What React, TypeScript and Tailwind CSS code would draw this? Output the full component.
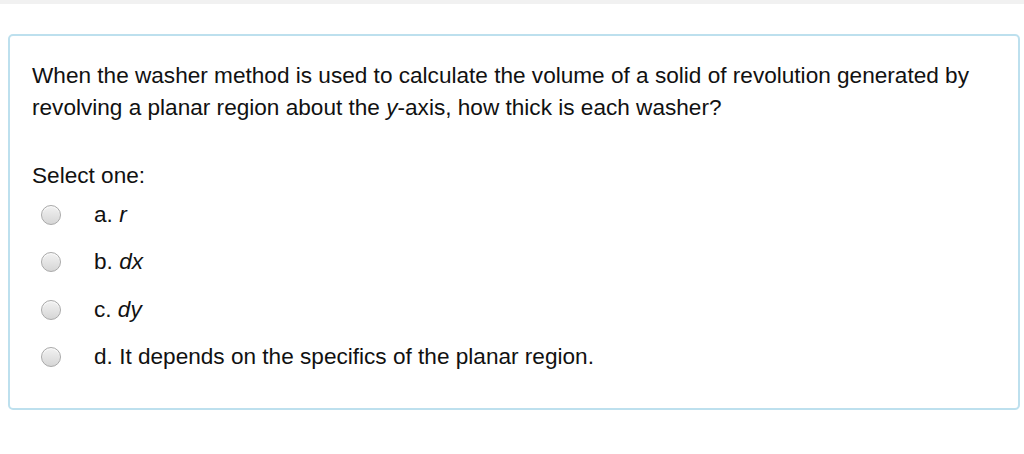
import React from 'react';

const options = [
  { letter: 'a.', text: 'r', italic: true },
  { letter: 'b.', text: 'dx', italic: true },
  { letter: 'c.', text: 'dy', italic: true },
  { letter: 'd.', text: 'It depends on the specifics of the planar region.', italic: false },
];

function Radio() {
  return (
    <span className="block w-[20px] h-[20px] rounded-full border border-[#a9a9a9] bg-gradient-to-b from-[#f2f2f2] to-[#d6d6d6] shadow-[inset_0_1px_1px_rgba(255,255,255,0.8)]" />
  );
}

export default function App() {
  return (
    <div className="w-[1024px] h-[454px] bg-white font-['Liberation_Sans',Arial,sans-serif] text-[#111]">
      <div className="h-[4px] bg-[#f1f1f1]" />
      <div className="pt-[30px] pl-[8px] pr-[4px]">
        <div className="h-[376px] border-2 border-[#bde0ee] rounded-[5px] pl-[22px] pt-[24px]">
          <p className="text-[22.6px] leading-[32px] pr-[10px]">
            When the washer method is used to calculate the volume of a solid of revolution generated by
            <br />
            revolving a planar region about the <i>y</i>-axis, how thick is each washer?
          </p>
          <p className="text-[22.6px] leading-[32px] mt-[36px]">Select one:</p>
          <div className="mt-[-1px] flex flex-col">
            {options.map((o) => (
              <label key={o.letter} className="flex items-center h-[47.5px]">
                <span className="ml-[9px] w-[53px]">
                  <Radio />
                </span>
                <span className="text-[22.6px]">
                  {o.letter} {o.italic ? <i>{o.text}</i> : o.text}
                </span>
              </label>
            ))}
          </div>
        </div>
      </div>
    </div>
  );
}
